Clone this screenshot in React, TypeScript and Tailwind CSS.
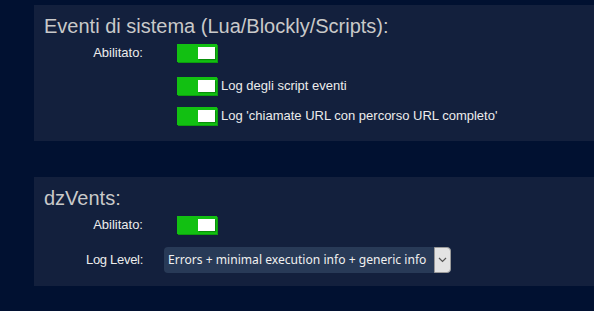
import React from 'react';

const Toggle: React.FC = () => (
  <div className="flex h-[18px] w-[40px] items-center justify-end bg-[#12c012] pr-[2px] shadow-[1px_1px_0_#0d9e0d]">
    <div className="h-[12px] w-[17px] bg-white shadow-[1px_1px_1px_#0a8f0a]" />
  </div>
);

const Label: React.FC<{ children: React.ReactNode }> = ({ children }) => (
  <div className="w-[109px] shrink-0 text-right text-[13px] text-[#ececec]">{children}</div>
);

const App: React.FC = () => {
  return (
    <div className="h-[311px] w-[594px] overflow-hidden bg-[#011131] pl-[34px] pt-[5px] font-['Liberation_Sans',Arial,sans-serif]">
      {/* Eventi di sistema */}
      <section className="h-[136px] bg-[#13203d] pt-[9px]">
        <h2 className="pl-[10px] text-[20px] leading-[24px] text-[#c9c9c9]">
          Eventi di sistema (Lua/Blockly/Scripts):
        </h2>
        <div className="mt-[6px] flex h-[18px] items-center">
          <Label>Abilitato:</Label>
          <div className="ml-[34px]">
            <Toggle />
          </div>
        </div>
        <div className="mt-[15px] flex h-[18px] items-center">
          <div className="ml-[143px]">
            <Toggle />
          </div>
          <span className="ml-[4px] text-[13px] text-[#ececec]">Log degli script eventi</span>
        </div>
        <div className="mt-[12px] flex h-[18px] items-center">
          <div className="ml-[143px]">
            <Toggle />
          </div>
          <span className="ml-[4px] text-[13px] text-[#ececec]">
            Log 'chiamate URL con percorso URL completo'
          </span>
        </div>
      </section>

      {/* dzVents */}
      <section className="mt-[36px] h-[109px] bg-[#13203d] pt-[9px]">
        <h2 className="pl-[10px] text-[20px] leading-[24px] text-[#c9c9c9]">dzVents:</h2>
        <div className="mt-[6px] flex h-[18px] items-center">
          <Label>Abilitato:</Label>
          <div className="ml-[34px]">
            <Toggle />
          </div>
        </div>
        <div className="mt-[13px] flex h-[26px] items-center">
          <Label>
            <span className="tracking-[-0.3px]">Log Level:</span>
          </Label>
          <div className="ml-[21px] flex h-[26px] w-[287px] items-stretch rounded-[4px] bg-[#283a57]">
            <span className="flex flex-1 items-center overflow-hidden whitespace-nowrap pl-[4px] font-['Noto_Sans',sans-serif] text-[12.1px] text-[#f0f0f0]">
              Errors + minimal execution info + generic info
            </span>
            <span className="flex w-[17px] shrink-0 items-center justify-center rounded-r-[4px] border border-[#9a9a9a] bg-[#e3e3e3]">
              <svg width="9" height="6" viewBox="0 0 9 6" fill="none">
                <path d="M1 1l3.5 3.5L8 1" stroke="#555" strokeWidth="1.2" />
              </svg>
            </span>
          </div>
        </div>
      </section>
    </div>
  );
};

export default App;
